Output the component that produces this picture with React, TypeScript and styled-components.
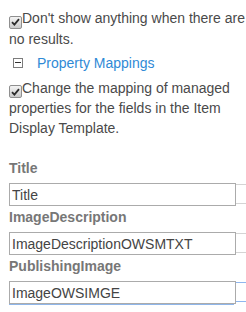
import React from "react";
import styled, { createGlobalStyle } from "styled-components";

const Global = createGlobalStyle`
  html, body { margin: 0; padding: 0; background: #fff; overflow: hidden; }
  body { font-family: "Liberation Sans", Arial, sans-serif; }
`;

const Page = styled.div`
  box-sizing: border-box;
  width: 246px;
  padding: 8px 0 0 9px;
  font-size: 14px;
  line-height: 20px;
  color: #4a4a4a;
`;

const Para = styled.div<{ $mt?: number }>`
  margin-top: ${(p) => p.$mt ?? 0}px;
`;

const Check = styled.span`
  display: inline-flex;
  align-items: center;
  justify-content: center;
  box-sizing: border-box;
  width: 13px;
  height: 13px;
  vertical-align: -3px;
  border: 1px solid #8f8f8f;
  border-radius: 2px;
  background: linear-gradient(#f4f4f4, #c9c9c9);
`;

const HeaderRow = styled.div`
  display: flex;
  align-items: center;
  margin-top: 4px;
  height: 20px;
`;

const Toggle = styled.span`
  box-sizing: border-box;
  width: 10px;
  height: 10px;
  margin-left: 4px;
  margin-right: 14px;
  border: 1px solid #7c7c7c;
  display: flex;
  align-items: center;
  justify-content: center;
  &::after {
    content: "";
    width: 6px;
    height: 1px;
    background: #333;
  }
`;

const Link = styled.a`
  color: #2f8ad6;
  text-decoration: none;
`;

const Fields = styled.div`
  margin-top: 20px;
`;

const Label = styled.div`
  font-weight: bold;
  color: #777;
`;

const FieldRow = styled.div`
  display: flex;
  align-items: flex-start;
  margin-top: 5px;
  margin-bottom: 1px;
`;

const Input = styled.input<{ $focus?: boolean }>`
  box-sizing: border-box;
  flex: none;
  width: 227px;
  height: 23px;
  margin: 0;
  padding: 0 2px;
  border: 1px solid #ababab;
  font-family: "Liberation Sans", Arial, sans-serif;
  font-size: 14px;
  color: #444;
  outline: none;
  box-shadow: ${(p) => (p.$focus ? "-1px 2px 0 -1px #8fb6ea" : "none")};
`;

const Side = styled.div<{ $focus?: boolean }>`
  box-sizing: border-box;
  flex: none;
  width: 10px;
  height: 20px;
  margin-top: 1px;
  border-top: 1px solid ${(p) => (p.$focus ? "#8fb6ee" : "#d4d4d4")};
  border-bottom: 1px solid ${(p) => (p.$focus ? "#8fb6ee" : "#d4d4d4")};
`;

const CheckMark = () => (
  <svg width="9" height="8" viewBox="0 0 9 8">
    <path d="M1 4.2 L3.4 6.6 L8 1.2" fill="none" stroke="#2b2b2b" strokeWidth="1.8" />
  </svg>
);

const fields = [
  { label: "Title", value: "Title" },
  { label: "ImageDescription", value: "ImageDescriptionOWSMTXT" },
  { label: "PublishingImage", value: "ImageOWSIMGE", focus: true },
];

export default function App() {
  return (
    <>
      <Global />
      <Page>
        <Para>
          <Check>
            <CheckMark />
          </Check>
          Don't show anything when there are no results.
        </Para>
        <HeaderRow>
          <Toggle />
          <Link>Property Mappings</Link>
        </HeaderRow>
        <Para $mt={5}>
          <Check>
            <CheckMark />
          </Check>
          Change the mapping of managed properties for the fields in the Item
          Display Template.
        </Para>
        <Fields>
          {fields.map((f) => (
            <div key={f.label}>
              <Label>{f.label}</Label>
              <FieldRow>
                <Input defaultValue={f.value} $focus={f.focus} readOnly />
                <Side $focus={f.focus} />
              </FieldRow>
            </div>
          ))}
        </Fields>
      </Page>
    </>
  );
}
